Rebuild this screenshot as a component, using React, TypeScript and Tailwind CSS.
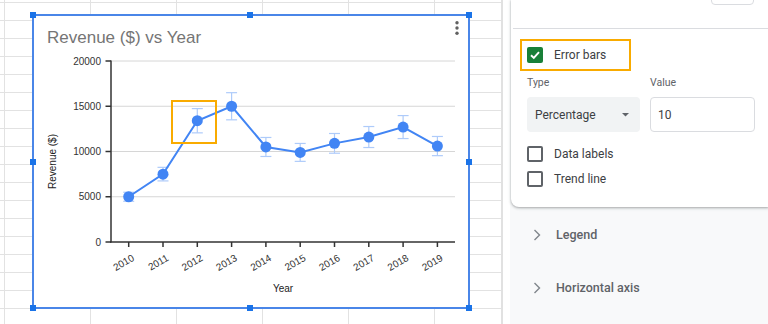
import React from "react";

const years = [2010, 2011, 2012, 2013, 2014, 2015, 2016, 2017, 2018, 2019];
const values = [5000, 7500, 13400, 15000, 10500, 9900, 10900, 11600, 12700, 10600];
const xOf = (i: number) => 128.7 + i * 34.3;
const yOf = (v: number) => 242 - v * 0.00905;

function Chart() {
  const pts = values.map((v, i) => [xOf(i), yOf(v)] as const);
  return (
    <svg
      className="absolute inset-0 w-[435px] h-[291px]"
      viewBox="34 16 435 291"
      style={{ fontFamily: '"Liberation Sans", Arial, sans-serif' }}
    >
      <text x={47} y={42.5} fontSize={17} fill="#757575">
        Revenue ($) vs Year
      </text>
      <circle cx={457} cy={22.8} r={1.7} fill="#616161" />
      <circle cx={457} cy={28} r={1.7} fill="#616161" />
      <circle cx={457} cy={33.2} r={1.7} fill="#616161" />
      {[0, 5000, 10000, 15000, 20000].map((v) => (
        <g key={v}>
          {v > 0 && (
            <line x1={111} x2={455} y1={yOf(v)} y2={yOf(v)} stroke="#d6d6d6" strokeWidth={1} />
          )}
          <line x1={105.5} x2={111} y1={yOf(v)} y2={yOf(v)} stroke="#333" strokeWidth={1.5} />
          <text x={101} y={yOf(v) + 3.6} fontSize={10} fill="#333" textAnchor="end">
            {v}
          </text>
        </g>
      ))}
      <line x1={111} x2={111} y1={60.5} y2={242.5} stroke="#333" strokeWidth={1.5} />
      <line x1={110} x2={455} y1={242} y2={242} stroke="#333" strokeWidth={1.5} />
      {years.map((yr, i) => (
        <g key={yr}>
          <line x1={xOf(i)} x2={xOf(i)} y1={242} y2={247} stroke="#333" strokeWidth={1.5} />
          <text
            x={xOf(i) + 6.3}
            y={260}
            fontSize={10}
            fill="#333"
            textAnchor="end"
            transform={`rotate(-30 ${xOf(i) + 6.3} 260)`}
          >
            {yr}
          </text>
        </g>
      ))}
      <text x={55.5} y={161.5} fontSize={10} fill="#222" textAnchor="middle" transform="rotate(-90 55.5 161.5)">
        Revenue ($)
      </text>
      <text x={283} y={292.3} fontSize={10} fill="#222" textAnchor="middle">
        Year
      </text>
      {values.map((v, i) => {
        const x = xOf(i);
        const t = yOf(v * 1.1);
        const b = yOf(v * 0.9);
        return (
          <g key={i} stroke="#aecbfa" strokeWidth={1.2}>
            <line x1={x} x2={x} y1={t} y2={b} />
            <line x1={x - 5.5} x2={x + 5.5} y1={t} y2={t} />
            <line x1={x - 5.5} x2={x + 5.5} y1={b} y2={b} />
          </g>
        );
      })}
      <polyline
        points={pts.map((p) => p.join(",")).join(" ")}
        fill="none"
        stroke="#4285f4"
        strokeWidth={2}
      />
      {pts.map((p, i) => (
        <circle key={i} cx={p[0]} cy={p[1]} r={5.5} fill="#4285f4" />
      ))}
      <rect x={172} y={101} width={44} height={42} fill="none" stroke="#f9ab00" strokeWidth={2} />
    </svg>
  );
}

function Handle({ className }: { className: string }) {
  return <div className={`absolute w-[6px] h-[6px] bg-[#1a73e8] ${className}`} />;
}

function Box({ checked }: { checked?: boolean }) {
  if (checked)
    return (
      <div className="w-[16px] h-[16px] rounded-[2px] bg-[#188038] flex items-center justify-center">
        <svg width="12" height="12" viewBox="0 0 12 12">
          <polyline points="2,6.3 4.8,9 10,3.2" fill="none" stroke="#fff" strokeWidth={1.9} />
        </svg>
      </div>
    );
  return <div className="w-[16px] h-[16px] rounded-[2px] border-2 border-[#5f6368]" />;
}

function Chevron() {
  return (
    <svg width="8" height="12" viewBox="0 0 8 12">
      <polyline points="1.5,1 6.5,6 1.5,11" fill="none" stroke="#80868b" strokeWidth={1.4} />
    </svg>
  );
}

export default function App() {
  return (
    <div
      className="w-[768px] h-[324px] overflow-hidden flex bg-white"
      style={{ fontFamily: 'Roboto, "Noto Sans", sans-serif' }}
    >
      <div className="relative w-[503px] h-full shrink-0 border-r-2 border-[#e1e1e1] bg-[linear-gradient(to_bottom,#e2e2e2_1px,transparent_1px),linear-gradient(to_right,#e2e2e2_1px,transparent_1px)] bg-[length:86px_18px] bg-[position:4px_2px]">
        <div className="absolute left-[32px] top-[14px] w-[438px] h-[295px] border-2 border-[#4a86e8] bg-white">
          <Chart />
          <Handle className="left-[-4px] top-[-4px]" />
          <Handle className="left-[213px] top-[-4px]" />
          <Handle className="left-[432px] top-[-4px]" />
          <Handle className="left-[-4px] top-[143px]" />
          <Handle className="left-[432px] top-[143px]" />
          <Handle className="left-[-4px] top-[289px]" />
          <Handle className="left-[213px] top-[289px]" />
          <Handle className="left-[432px] top-[289px]" />
        </div>
      </div>
      <div className="w-[7px] shrink-0 bg-white" />
      <div className="flex-1 bg-[#f8f9fa] flex flex-col">
        <div className="ml-px h-[207px] bg-white rounded-bl-[8px] shadow-[0_1px_2px_rgba(60,64,67,0.3),0_1px_3px_1px_rgba(60,64,67,0.12)] flex flex-col">
          <div className="h-[28px] flex justify-end pr-[14px]">
            <div className="-mt-[30px] w-[43px] h-[35px] border border-[#dadce0] rounded-[4px]" />
          </div>
          <div className="ml-[2px] h-px bg-[#dadce0]" />
          <div className="pl-[16px] flex flex-col">
            <div className="mt-[10px] -ml-[7px] w-[111px] h-[32px] border-2 border-[#f9ab00] pl-[5px] flex items-center gap-[11px]">
              <Box checked />
              <span className="text-[12px] text-[#3c4043]">Error bars</span>
            </div>
            <div className="mt-[4px] h-[16px] flex items-center text-[10.5px] text-[#5f6368]">
              <span className="w-[123px]">Type</span>
              <span>Value</span>
            </div>
            <div className="mt-[6px] flex gap-[10px]">
              <div className="w-[113px] h-[35px] rounded-[4px] bg-[#f1f3f4] flex items-center justify-between pl-[8px] pr-[11px]">
                <span className="text-[12px] text-[#3c4043]">Percentage</span>
                <svg width="7" height="4" viewBox="0 0 7 4">
                  <path d="M0 0 L7 0 L3.5 3.5 Z" fill="#5f6368" />
                </svg>
              </div>
              <div className="w-[105px] h-[35px] rounded-[4px] border border-[#dadce0] flex items-center pl-[7px]">
                <span className="text-[12px] text-[#3c4043]">10</span>
              </div>
            </div>
            <div className="mt-[14px] h-[16px] flex items-center gap-[11px]">
              <Box />
              <span className="text-[12px] text-[#3c4043]">Data labels</span>
            </div>
            <div className="mt-[9px] h-[16px] flex items-center gap-[11px]">
              <Box />
              <span className="text-[12px] text-[#3c4043]">Trend line</span>
            </div>
          </div>
        </div>
        <div className="mt-[1.5px] flex flex-col pl-[23px]">
          <div className="h-[53px] flex items-center gap-[15px]">
            <Chevron />
            <span className="text-[12.5px] font-medium text-[#5f6368]">Legend</span>
          </div>
          <div className="h-[53px] flex items-center gap-[15px]">
            <Chevron />
            <span className="text-[12.5px] font-medium text-[#5f6368]">Horizontal axis</span>
          </div>
        </div>
      </div>
    </div>
  );
}
